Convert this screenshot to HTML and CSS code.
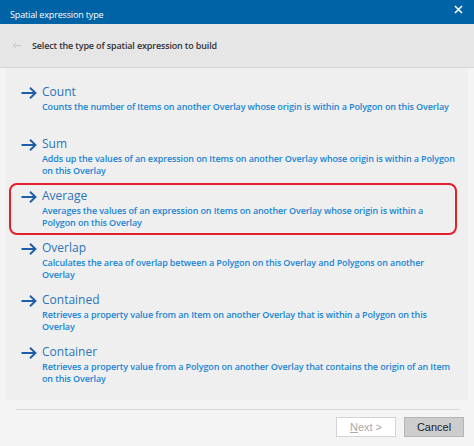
FILE: index.html
```html
<!DOCTYPE html>
<html>
<head>
<meta charset="utf-8">
<link rel="stylesheet" href="styles.css">
</head>
<body>
<div class="window">
  <div class="titlebar">
    <span class="title">Spatial expression type</span>
    <svg class="close" width="9" height="9" viewBox="0 0 9 9"><path d="M1 1L8 8M8 1L1 8" stroke="#fff" stroke-width="1.6"/></svg>
  </div>
  <div class="header">
    <svg class="back" width="9" height="7" viewBox="0 0 9 7"><path d="M9 3.5H1.5M4 0.8L1.2 3.5L4 6.2" stroke="#c4c4c4" stroke-width="1" fill="none"/></svg>
    <span class="heading">Select the type of spatial expression to build</span>
  </div>
  <div class="content">
    <div class="list">
      <div class="item">
        <svg class="arrow" width="16" height="12" viewBox="0 0 16 12"><path d="M0.5 6H14.5M9 0.8L14.5 6L9 11.2" stroke="#1d5ea8" stroke-width="1.9" fill="none"/></svg>
        <div class="text">
          <div class="name">Count</div>
          <div class="desc">Counts the number of Items on another Overlay whose origin is within a Polygon on this Overlay</div>
        </div>
      </div>
      <div class="item">
        <svg class="arrow" width="16" height="12" viewBox="0 0 16 12"><path d="M0.5 6H14.5M9 0.8L14.5 6L9 11.2" stroke="#1d5ea8" stroke-width="1.9" fill="none"/></svg>
        <div class="text">
          <div class="name">Sum</div>
          <div class="desc">Adds up the values of an expression on Items on another Overlay whose origin is within a Polygon<br>on this Overlay</div>
        </div>
      </div>
      <div class="item selected">
        <svg class="arrow" width="16" height="12" viewBox="0 0 16 12"><path d="M0.5 6H14.5M9 0.8L14.5 6L9 11.2" stroke="#1d5ea8" stroke-width="1.9" fill="none"/></svg>
        <div class="text">
          <div class="name">Average</div>
          <div class="desc">Averages the values of an expression on Items on another Overlay whose origin is within a<br>Polygon on this Overlay</div>
        </div>
      </div>
      <div class="item">
        <svg class="arrow" width="16" height="12" viewBox="0 0 16 12"><path d="M0.5 6H14.5M9 0.8L14.5 6L9 11.2" stroke="#1d5ea8" stroke-width="1.9" fill="none"/></svg>
        <div class="text">
          <div class="name">Overlap</div>
          <div class="desc">Calculates the area of overlap between a Polygon on this Overlay and Polygons on another<br>Overlay</div>
        </div>
      </div>
      <div class="item">
        <svg class="arrow" width="16" height="12" viewBox="0 0 16 12"><path d="M0.5 6H14.5M9 0.8L14.5 6L9 11.2" stroke="#1d5ea8" stroke-width="1.9" fill="none"/></svg>
        <div class="text">
          <div class="name">Contained</div>
          <div class="desc">Retrieves a property value from an Item on another Overlay that is within a Polygon on this<br>Overlay</div>
        </div>
      </div>
      <div class="item">
        <svg class="arrow" width="16" height="12" viewBox="0 0 16 12"><path d="M0.5 6H14.5M9 0.8L14.5 6L9 11.2" stroke="#1d5ea8" stroke-width="1.9" fill="none"/></svg>
        <div class="text">
          <div class="name">Container</div>
          <div class="desc">Retrieves a property value from a Polygon on another Overlay that contains the origin of an Item<br>on this Overlay</div>
        </div>
      </div>
    </div>
  </div>
  <div class="footer">
    <div class="sep"></div>
    <div class="buttons">
      <button class="btn disabled"><u>N</u>ext &gt;</button>
      <button class="btn cancel">Cancel</button>
    </div>
  </div>
</div>
</body>
</html>
```

FILE: styles.css
```css
* { box-sizing: border-box; }
html, body { margin: 0; padding: 0; }
body {
  width: 474px;
  height: 446px;
  background: #f4f4f4;
  font-family: "Open Sans", "Noto Sans", sans-serif;
  overflow: hidden;
}
.window {
  display: flex;
  flex-direction: column;
  width: 474px;
  height: 446px;
}
.titlebar {
  height: 24px;
  background: #0063a6;
  display: flex;
  align-items: center;
  justify-content: space-between;
  padding: 0 11px 0 10px;
}
.title {
  color: #fff;
  font-size: 9px;
  letter-spacing: -0.15px;
  line-height: 24px;
  padding-top: 6px;
}
.close { margin-top: -6px; }
.header {
  height: 44px;
  background: #e6e6e6;
  border-bottom: 1px solid #d6d6d6;
  display: flex;
  align-items: center;
  padding-left: 12px;
}
.back { margin-right: 11px; }
.heading {
  font-size: 9px;
  letter-spacing: -0.15px;
  font-weight: 600;
  color: #333;
}
.content {
  margin: 0 6px;
  background: #efefef;
  padding: 11px 0 9px 3px;
}
.list { display: flex; flex-direction: column; }
.item {
  height: 52px;
  width: 448px;
  border: 2px solid transparent;
  border-radius: 8px;
  padding: 2px 0 0 10px;
  display: flex;
  gap: 5px;
}
.item.selected { border-color: #e3202b; }
.arrow { margin-top: 4px; flex: none; }
.name {
  font-size: 12px;
  line-height: 18px;
  color: #2d73ba;
}
.desc {
  font-size: 9px;
  line-height: 12px;
  letter-spacing: -0.12px;
  font-weight: 600;
  color: #1a85d2;
  white-space: nowrap;
}
.footer {
  flex: 1;
  padding: 9px 10px 0 16px;
}
.sep {
  height: 1px;
  background: #d8d8d8;
  margin-right: 4px;
}
.buttons {
  display: flex;
  justify-content: flex-end;
  gap: 8px;
  margin-top: 7px;
}
.btn {
  width: 60px;
  height: 20px;
  font-family: "Liberation Sans", Arial, sans-serif;
  font-size: 11px;
  padding: 0;
  border: 1px solid #c8c8c8;
}
.btn.disabled { background: #fff; color: #a8a8a8; border-color: #d4d4d4; }
.btn.cancel { background: #cdcdcd; color: #222; border-color: #b4b4b4; }
```
